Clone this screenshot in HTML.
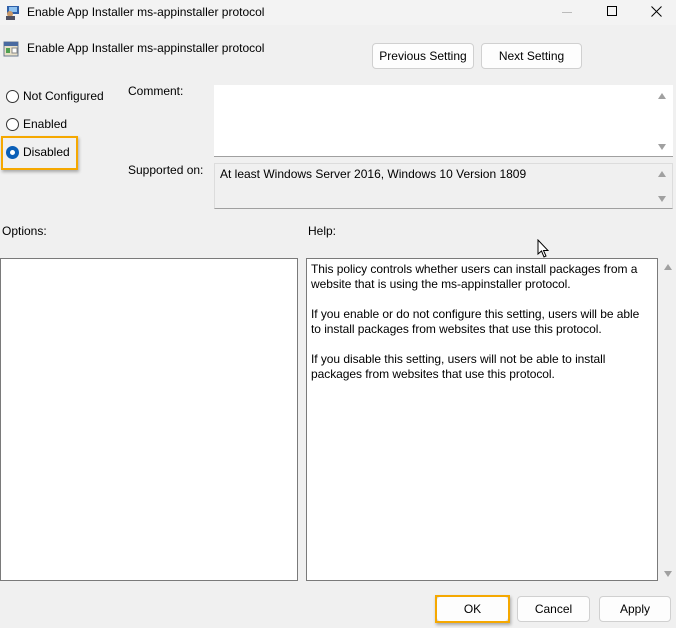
<!DOCTYPE html>
<html><head><meta charset="utf-8"><style>
*{margin:0;padding:0;box-sizing:border-box}
body{width:676px;height:628px;background:#f0f0f0;font-family:"Liberation Sans",sans-serif;font-size:12px;color:#000;position:relative;overflow:hidden}
.a{position:absolute;white-space:nowrap;letter-spacing:0}
.box{position:absolute;background:#fff;border:1px solid #7a7a7a}
.btn{position:absolute;background:#fdfdfd;border:1px solid #d0d0d0;border-radius:4px;text-align:center;line-height:24px}
.rad{position:absolute;width:13px;height:13px;border:1px solid #333;border-radius:50%;background:#fff}
.tri{position:absolute;width:0;height:0;border-left:4px solid transparent;border-right:4px solid transparent}
.up{border-bottom:6px solid #a0a0a0}
.dn{border-top:6px solid #a0a0a0}
</style></head><body>
<div style="position:absolute;left:0;top:0;width:676px;height:25px;background:#f3f3f3"></div>
<svg class="a" style="left:5px;top:4px" width="16" height="16"><rect x="2" y="2" width="12" height="8" fill="#2f5fa8"/><rect x="4" y="3" width="8" height="5" fill="#8fc2f0"/><circle cx="5" cy="10" r="3" fill="#c89868"/><rect x="1" y="12" width="9" height="4" fill="#505060"/></svg>
<div class="a" style="left:27px;top:5px">Enable App Installer ms-appinstaller protocol</div>
<div class="a" style="left:562px;top:12px;width:10px;height:1px;background:#bbb"></div>
<div class="a" style="left:607px;top:6px;width:10px;height:10px;border:1px solid #000"></div>
<svg class="a" style="left:651px;top:6px" width="11" height="11"><path d="M0.5 0.5L10.5 10.5M10.5 0.5L0.5 10.5" stroke="#000" stroke-width="1"/></svg>
<svg class="a" style="left:3px;top:41px" width="16" height="16"><rect x="1" y="1" width="14" height="14" fill="#e8e0c8" stroke="#6a7a90"/><rect x="1" y="1" width="14" height="4" fill="#4a6aa0"/><rect x="3" y="7" width="4" height="5" fill="#50a050"/><rect x="9" y="7" width="5" height="5" fill="#fff" stroke="#888"/></svg>
<div class="a" style="left:27px;top:41px">Enable App Installer ms-appinstaller protocol</div>
<div class="btn" style="left:372px;top:43px;width:102px;height:26px">Previous Setting</div>
<div class="btn" style="left:481px;top:43px;width:101px;height:26px">Next Setting</div>
<div class="rad" style="left:6px;top:90px"></div><div class="a" style="left:23px;top:89px">Not Configured</div>
<div class="rad" style="left:6px;top:118px"></div><div class="a" style="left:23px;top:117px">Enabled</div>
<div class="rad" style="left:6px;top:146px;background:#0a5fb8;border-color:#0a5fb8"><div style="position:absolute;left:3px;top:3px;width:5px;height:5px;border-radius:50%;background:#fff"></div></div><div class="a" style="left:23px;top:145px">Disabled</div>
<div class="a" style="left:1px;top:136px;width:77px;height:34px;border:2px solid #f5a800;box-shadow:1px 2px 3px rgba(0,0,0,.3)"></div>
<div class="a" style="left:128px;top:84px">Comment:</div>
<div class="a" style="left:128px;top:163px">Supported on:</div>
<div class="box" style="left:214px;top:85px;width:459px;height:72px;border:none;border-bottom:1px solid #a0a0a0"></div>
<div class="tri up" style="left:658px;top:93px"></div><div class="tri dn" style="left:658px;top:144px"></div>
<div class="box" style="left:214px;top:163px;width:459px;height:46px;background:#f0f0f0;border:1px solid #dcdcdc;border-bottom-color:#a0a0a0"></div>
<div class="a" style="left:220px;top:167px">At least Windows Server 2016, Windows 10 Version 1809</div>
<div class="tri up" style="left:658px;top:171px"></div><div class="tri dn" style="left:658px;top:196px"></div>
<div class="a" style="left:2px;top:224px">Options:</div>
<div class="a" style="left:308px;top:224px">Help:</div>
<svg class="a" style="left:537px;top:239px" width="12" height="20"><path d="M1 1L1 15L4.5 12L7 18L9 17L6.5 11.5L11 11.5Z" fill="#fff" stroke="#000"/></svg>
<div class="box" style="left:0;top:258px;width:298px;height:323px"></div>
<div class="box" style="left:306px;top:258px;width:352px;height:323px"></div>
<div class="a" style="left:311px;top:262px;line-height:15px;letter-spacing:-0.05px">This policy controls whether users can install packages from a<br>website that is using the ms-appinstaller protocol.<br><br>If you enable or do not configure this setting, users will be able<br>to install packages from websites that use this protocol.<br><br>If you disable this setting, users will not be able to install<br>packages from websites that use this protocol.</div>
<div class="tri up" style="left:664px;top:264px"></div><div class="tri dn" style="left:664px;top:571px"></div>
<div class="btn" style="left:436px;top:596px;width:73px;height:26px">OK</div>
<div class="a" style="left:435px;top:595px;width:75px;height:28px;border:2px solid #f5a800;box-shadow:1px 2px 3px rgba(0,0,0,.3)"></div>
<div class="btn" style="left:517px;top:596px;width:73px;height:26px">Cancel</div>
<div class="btn" style="left:599px;top:596px;width:72px;height:26px">Apply</div>
</body></html>
